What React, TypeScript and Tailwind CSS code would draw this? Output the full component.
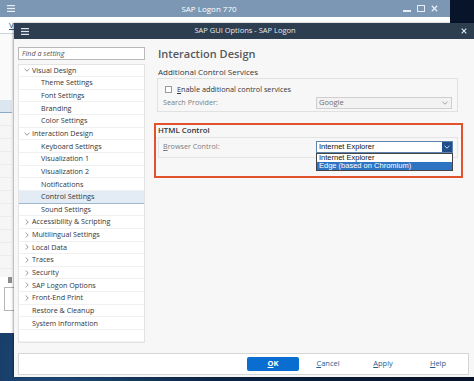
import React from "react";

type Item = { t: string; lvl: 1 | 2; chev?: "down" | "right"; sel?: boolean };

const items: Item[] = [
  { t: "Visual Design", lvl: 1, chev: "down" },
  { t: "Theme Settings", lvl: 2 },
  { t: "Font Settings", lvl: 2 },
  { t: "Branding", lvl: 2 },
  { t: "Color Settings", lvl: 2 },
  { t: "Interaction Design", lvl: 1, chev: "down" },
  { t: "Keyboard Settings", lvl: 2 },
  { t: "Visualization 1", lvl: 2 },
  { t: "Visualization 2", lvl: 2 },
  { t: "Notifications", lvl: 2 },
  { t: "Control Settings", lvl: 2, sel: true },
  { t: "Sound Settings", lvl: 2 },
  { t: "Accessibility & Scripting", lvl: 1, chev: "right" },
  { t: "Multilingual Settings", lvl: 1, chev: "right" },
  { t: "Local Data", lvl: 1, chev: "right" },
  { t: "Traces", lvl: 1, chev: "right" },
  { t: "Security", lvl: 1, chev: "right" },
  { t: "SAP Logon Options", lvl: 1, chev: "right" },
  { t: "Front-End Print", lvl: 1, chev: "right" },
  { t: "Restore & Cleanup", lvl: 1 },
  { t: "System Information", lvl: 1 },
];

function Chevron({ dir, color = "#7a7d80" }: { dir: "down" | "right"; color?: string }) {
  return dir === "down" ? (
    <svg width="6" height="4" viewBox="0 0 6 4" className="block">
      <path d="M0.5 0.8 L3 3.2 L5.5 0.8" fill="none" stroke={color} strokeWidth="0.8" />
    </svg>
  ) : (
    <svg width="4" height="6" viewBox="0 0 4 6" className="block">
      <path d="M0.8 0.5 L3.2 3 L0.8 5.5" fill="none" stroke={color} strokeWidth="0.8" />
    </svg>
  );
}

function Hamburger({ color }: { color: string }) {
  return (
    <svg width="8" height="7" viewBox="0 0 8 7" className="block">
      <rect x="0" y="0" width="8" height="1.2" fill={color} />
      <rect x="0" y="2.9" width="8" height="1.2" fill={color} />
      <rect x="0" y="5.8" width="8" height="1.2" fill={color} />
    </svg>
  );
}

function CloseX({ color, size = 7 }: { color: string; size?: number }) {
  return (
    <svg width={size} height={size} viewBox="0 0 7 7" className="block">
      <path d="M0.8 0.8 L6.2 6.2 M6.2 0.8 L0.8 6.2" stroke={color} strokeWidth="1.3" />
    </svg>
  );
}

export default function App() {
  return (
    <div className="relative w-[474px] h-[381px] overflow-hidden bg-[#0c2142] font-['Open_Sans',sans-serif]">
      {/* desktop texture */}
      <div className="absolute inset-0 bg-[radial-gradient(circle_at_10%_95%,#1d4a7a_0%,#0d2545_30%,#08142a_70%)]" />

      {/* Background window: SAP Logon 770 */}
      <div className="absolute left-0 top-0 w-[450px] h-[333px] flex flex-col bg-white">
        <div className="h-[17px] bg-[#7b97b4] flex items-center px-[7px]">
          <Hamburger color="#e8eef5" />
          <div className="flex-1 text-center text-[8px] text-white leading-none">SAP Logon 770</div>
          <div className="flex items-center gap-[6px] mr-[5px]">
            <div className="w-[8px] h-[1.5px] bg-[#e6edf5] mt-[5px]" />
            <div className="w-[8px] h-[7px] border-[1.3px] border-[#e6edf5]" />
            <CloseX color="#e6edf5" />
          </div>
        </div>
        <div className="flex flex-col">
          <div className="h-[16px] pl-[9px] pt-[4px] text-[8px] leading-none text-[#2a5d8f] underline">Variables</div>
          <div className="h-px bg-[#cfd4d9]" />
          <div className="h-[66px] bg-[#fafafa]" />
          <div className="h-[13px] w-[12px] bg-[#dbe6f1] border-b border-[#8aa8c8]" />
          <div className="h-[164px] w-[12px] bg-[#f6f6f6] flex flex-col">
            {Array.from({ length: 12 }).map((_, i) => (
              <div key={i} className="h-[13px] border-b border-[#ececec]" />
            ))}
          </div>
          <div className="ml-[8px] w-[4px] h-[6px] bg-[#8c8c8c]" />
          <div className="mt-[4px] ml-[4px] w-[12px] h-[24px] border border-[#b5b5b5] bg-white" />
        </div>
      </div>

      {/* Dialog: SAP GUI Options */}
      <div className="absolute left-[14px] top-[23px] w-[462px] h-[354px] flex flex-col bg-[#f7f7f7] shadow-[-1px_0_2px_rgba(0,0,0,0.35)]">
        <div className="h-[16px] bg-[#2d3e50] flex items-center pl-[7px] pr-[9px]">
          <Hamburger color="#dfe6ee" />
          <div className="flex-1 text-center text-[7.5px] text-[#e4e9ef] leading-none">SAP GUI Options - SAP Logon</div>
          <CloseX color="#e4e9ef" size={6} />
        </div>

        <div className="flex-1 flex flex-col pl-[4px] pt-[8px]">
          <div className="flex h-[296px] gap-[9px]">
            {/* left column */}
            <div className="w-[127px] flex flex-col gap-[4px]">
              <div className="h-[15px] bg-white border border-[#b9b9b9] flex items-center pl-[3px] text-[7.2px] italic text-[#555] leading-none">
                Find a setting
              </div>
              <div className="flex-1 bg-white border border-[#e3e3e3] flex flex-col">
                {items.map((it) => (
                  <div
                    key={it.t}
                    className={
                      "h-[12.65px] flex items-center text-[7.2px] leading-none text-[#32363a] border-b " +
                      (it.sel ? "bg-[#e3ebf4] border-[#9fb6cf]" : "border-[#f0f0f0]")
                    }
                  >
                    <div className="w-[13px] flex justify-center pl-[2px]">
                      {it.chev ? <Chevron dir={it.chev} /> : null}
                    </div>
                    <div className={it.lvl === 2 ? "pl-[9px]" : ""}>{it.t}</div>
                  </div>
                ))}
                <div className="h-[12px] border-b border-[#f0f0f0]" />
              </div>
            </div>

            {/* right column */}
            <div className="w-[309px] flex flex-col">
              <div className="h-[13px] pl-[4px] text-[11px] leading-[13px] font-semibold text-[#55595e]">
                Interaction Design
              </div>
              <div className="mt-[6px] h-[12px] pl-[4px] text-[8px] leading-[12px] text-[#32363a]">
                Additional Control Services
              </div>
              {/* group 1 */}
              <div className="ml-[3px] w-[301px] h-[34px] border border-[#e1e1e1] flex flex-col">
                <div className="mt-[6px] h-[9px] flex items-center pl-[7px]">
                  <div className="w-[7px] h-[7px] bg-white border border-[#9a9a9a]" />
                  <div className="ml-[5px] text-[7.3px] leading-none text-[#32363a]">
                    <span className="underline">E</span>nable additional control services
                  </div>
                </div>
                <div className="mt-[3px] flex items-center pl-[5px]">
                  <div className="w-[153px] text-[7.2px] leading-none text-[#7a7e83]">Search Provider:</div>
                  <div className="w-[136px] h-[12px] bg-[#f2f2f2] border border-[#cfcfcf] flex items-center pl-[2px] pr-[3px]">
                    <div className="flex-1 text-[7.5px] leading-none text-[#6a6d70]">Google</div>
                    <Chevron dir="down" color="#8a8d90" />
                  </div>
                </div>
              </div>

              {/* HTML control highlighted */}
              <div className="relative mt-[11px] w-[309px] h-[55px] border-2 border-[#e2532d] flex flex-col">
                <div className="h-[10px] pl-[2px] text-[7.8px] leading-[10px] font-semibold text-[#32363a]">HTML Control</div>
                <div className="mt-[2px] ml-[2px] w-[300px] h-[21px] border border-[#e4e4e4] flex flex-col">
                  <div className="mt-[3px] flex items-center pl-[4px]">
                    <div className="w-[153px] text-[7.2px] leading-none text-[#7a7e83]">
                      <span className="underline">B</span>rowser Control:
                    </div>
                    <div className="w-[137px] h-[12px] bg-white border border-[#5f84ad] flex items-stretch">
                      <div className="flex-1 flex items-center pl-[2px] font-['Liberation_Sans',sans-serif] text-[7.5px] leading-none text-[#111]">Internet Explorer</div>
                      <div className="w-[10px] bg-[#1e4f8c] flex items-center justify-center">
                        <Chevron dir="down" color="#ffffff" />
                      </div>
                    </div>
                  </div>
                </div>
                {/* dropdown list */}
                <div className="absolute left-[160px] top-[28px] w-[137px] h-[18px] bg-white border border-[#444] flex flex-col font-['Liberation_Sans',sans-serif]">
                  <div className="h-[8.5px] flex items-center pl-[2px] text-[7.5px] leading-[8px] text-[#111]">Internet Explorer</div>
                  <div className="h-[8.5px] flex items-center pl-[2px] bg-[#2f73c3] text-[7.5px] leading-[8px] text-white">Edge (based on Chromium)</div>
                </div>
              </div>
            </div>
          </div>

          {/* bottom bar */}
          <div className="mt-[10px] w-[451px] h-[22px] bg-white border border-[#d6d6d6] flex items-center justify-end gap-[3px] pr-[4px]">
            <div className="w-[52px] h-[14px] rounded-[2px] bg-[#0a6ed1] flex items-center justify-center text-[7.5px] font-bold text-white leading-none">
              <span className="underline">O</span>K
            </div>
            <div className="w-[52px] h-[14px] flex items-center justify-center text-[7.5px] text-[#2a5d8f] leading-none">
              <span className="underline">C</span>ancel
            </div>
            <div className="w-[52px] h-[14px] flex items-center justify-center text-[7.5px] text-[#2a5d8f] leading-none">
              <span className="underline">A</span>pply
            </div>
            <div className="w-[52px] h-[14px] flex items-center justify-center text-[7.5px] text-[#2a5d8f] leading-none">
              <span className="underline">H</span>elp
            </div>
          </div>
        </div>
      </div>
    </div>
  );
}
